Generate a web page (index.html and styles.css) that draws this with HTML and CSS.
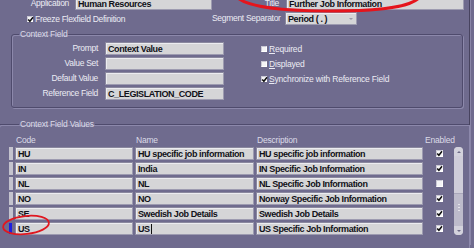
FILE: index.html
```html
<!DOCTYPE html>
<html>
<head>
<meta charset="utf-8">
<link rel="stylesheet" href="styles.css">
</head>
<body>
<div class="window">
  <div class="row r1">
    <span class="lbl w69">Application</span><span class="fld w137">Human Resources</span>
    <span class="lbl w67">Title</span><span class="fld w178">Further Job Information</span>
  </div>
  <div class="row r2">
    <span class="freeze"><span class="cb on"><svg viewBox="0 0 7 7"><path d="M1.2 3.4 L2.9 5.3 L6 1.3"/></svg></span>Freeze Flexfield Definition</span>
    <span class="lbl w67">Segment Separator</span><span class="fld sel">Period ( . )<span class="arr"></span></span>
  </div>

  <fieldset class="group ctx">
    <legend>Context Field</legend>
    <div class="ctx-body">
      <div class="ctx-fields">
        <span class="lbl r">Prompt</span><span class="fld">Context Value</span>
        <span class="lbl r">Value Set</span><span class="fld"></span>
        <span class="lbl r">Default Value</span><span class="fld"></span>
        <span class="lbl r">Reference Field</span><span class="fld">C_LEGISLATION_CODE</span>
      </div>
      <div class="ctx-checks">
        <span class="chk"><span class="cb"></span><u>R</u>equired</span>
        <span class="chk"><span class="cb"></span><u>D</u>isplayed</span>
        <span class="chk"><span class="cb on"><svg viewBox="0 0 7 7"><path d="M1.2 3.4 L2.9 5.3 L6 1.3"/></svg></span><u>S</u>ynchronize with Reference Field</span>
      </div>
    </div>
  </fieldset>

  <fieldset class="group vals">
    <legend>Context Field Values</legend>
    <div class="tbl">
      <span></span><span class="hd">Code</span><span class="hd">Name</span><span class="hd">Description</span><span class="hd c">Enabled</span><span></span>

      <span class="ind"></span><span class="fld">HU</span><span class="fld">HU specific job information</span><span class="fld">HU specific job information</span><span class="en"><span class="cb on"><svg viewBox="0 0 7 7"><path d="M1.2 3.4 L2.9 5.3 L6 1.3"/></svg></span></span>
      <span class="sb"><span class="sb-up"></span><span class="sb-thumb"></span><span class="sb-track"><i></i><i></i><i></i></span><span class="sb-down"></span></span>

      <span class="ind"></span><span class="fld">IN</span><span class="fld">India</span><span class="fld">IN Specific Job Information</span><span class="en"><span class="cb on"><svg viewBox="0 0 7 7"><path d="M1.2 3.4 L2.9 5.3 L6 1.3"/></svg></span></span>

      <span class="ind"></span><span class="fld">NL</span><span class="fld">NL</span><span class="fld">NL Specific Job Information</span><span class="en"><span class="cb"></span></span>

      <span class="ind"></span><span class="fld">NO</span><span class="fld">NO</span><span class="fld">Norway Specific Job Information</span><span class="en"><span class="cb on"><svg viewBox="0 0 7 7"><path d="M1.2 3.4 L2.9 5.3 L6 1.3"/></svg></span></span>

      <span class="ind"></span><span class="fld">SE</span><span class="fld">Swedish Job Details</span><span class="fld">Swedish Job Details</span><span class="en"><span class="cb on"><svg viewBox="0 0 7 7"><path d="M1.2 3.4 L2.9 5.3 L6 1.3"/></svg></span></span>

      <span class="ind cur"><i></i></span><span class="fld">US</span><span class="fld">US<span class="caret"></span></span><span class="fld">US Specific Job Information</span><span class="en"><span class="cb on"><svg viewBox="0 0 7 7"><path d="M1.2 3.4 L2.9 5.3 L6 1.3"/></svg></span></span>
    </div>
  </fieldset>

  <svg class="marks" width="474" height="248" viewBox="0 0 474 248">
    <path d="M234,-6 C234,8 272,14 330,14 C392,14 419,8 422,-4" />
    <ellipse cx="26" cy="228" rx="23" ry="9" transform="rotate(-6 26 228)" />
  </svg>
</div>
</body>
</html>
```
FILE: styles.css
```css
* { box-sizing: border-box; }
html, body { margin: 0; padding: 0; }
body {
  background: #6f6b8e;
  font-family: "Liberation Sans", Arial, sans-serif;
  width: 474px;
  height: 248px;
  overflow: hidden;
}
.window {
  position: relative;
  width: 470px;
  height: 248px;
  border-right: 1px solid #47435f;
  box-shadow: 1px 0 0 #8a86a8;
}
.row {
  display: flex;
  align-items: center;
  height: 13px;
}
.r1 { margin-top: -3px; }
.r2 { margin-top: 2px; }

.lbl {
  color: #ecebf4;
  font-size: 8.5px;
  letter-spacing: -0.3px;
  white-space: nowrap;
  line-height: 13px;
}
.w69 { width: 69px; text-align: right; margin-right: 6px; }
.w67 { width: 67px; text-align: right; margin-right: 7px; }
.r2 .w67 { margin-right: 6px; }

.fld {
  display: flex;
  align-items: center;
  height: 13px;
  background: #d5d5d7;
  border: 1px solid #9d9bb0;
  border-top-color: #8a889e;
  border-left-color: #8a889e;
  box-shadow: inset 1px 1px 0 #ececf0;
  color: #111118;
  font-weight: bold;
  font-size: 9px;
  letter-spacing: -0.4px;
  padding-left: 2px;
  white-space: nowrap;
  overflow: hidden;
}
.w137 { width: 137px; }
.w178 { width: 178px; }
.sel { width: 72px; position: relative; }
.arr {
  margin-left: auto;
  margin-right: 3px;
  width: 0; height: 0;
  border-left: 2px solid transparent;
  border-right: 2px solid transparent;
  border-top: 2px solid #9a98a8;
}

.freeze {
  display: flex;
  align-items: center;
  width: 212px;
  padding-left: 27px;
  color: #ecebf4;
  font-size: 8.5px;
  letter-spacing: -0.3px;
  white-space: nowrap;
}
.cb {
  display: inline-block;
  flex: none;
  width: 6px;
  height: 6px;
  background: #f4f4f6;
  border: 1px solid #c9c8d4;
  border-right-color: #fff;
  border-bottom-color: #fff;
  margin-right: 2px;
  position: relative;
}
.cb svg {
  position: absolute;
  left: -1px; top: -1px;
  width: 7px; height: 7px;
  fill: none;
  stroke: #101010;
  stroke-width: 1.5;
}

.group {
  margin: 0;
  padding: 0;
  border: 1px solid #4f4b6d;
  border-radius: 3px;
  box-shadow: 1px 1px 0 #8c88ab, inset 1px 1px 0 #8c88ab;
  min-width: 0;
}
.group legend {
  color: #dcdbe8;
  font-size: 8.5px;
  letter-spacing: -0.2px;
  line-height: 10px;
  padding: 0 1px;
}
.ctx {
  margin: 4px 0 0 11px;
  width: 452px;
  padding: 0 0 7px 0;
}
.ctx legend { margin-left: 7px; }
.ctx-body {
  display: flex;
  padding-top: 3px;
}
.ctx-fields {
  display: grid;
  grid-template-columns: 86px 119px;
  grid-auto-rows: 13px;
  column-gap: 7px;
  row-gap: 2px;
}
.lbl.r { text-align: right; }
.ctx-checks {
  display: flex;
  flex-direction: column;
  gap: 2px;
  margin-left: 37px;
}
.chk {
  display: flex;
  align-items: center;
  height: 13px;
  color: #ecebf4;
  font-size: 8.5px;
  letter-spacing: -0.2px;
  white-space: nowrap;
}
.chk u { text-decoration-thickness: 1px; text-underline-offset: 1px; }

.vals {
  margin: 11px 0 0 -2px;
  width: 471px;
  padding: 6px 0 20px 10px;
  border-right: none;
  border-radius: 3px 0 0 3px;
}
.vals legend { margin-left: 10px; }
.tbl {
  display: grid;
  grid-template-columns: 4px 118px 119px 167px 27px 9px;
  grid-template-rows: 10px repeat(6, 13px);
  column-gap: 2px;
  row-gap: 2px;
}
.hd {
  color: #dcdbe8;
  font-size: 8.5px;
  letter-spacing: -0.2px;
  line-height: 10px;
  padding-left: 1px;
  white-space: nowrap;
}
.hd.c { text-align: center; padding-left: 0; }
.ind {
  background: #c4c3ce;
  position: relative;
}
.ind.cur { background: transparent; }
.ind.cur i {
  position: absolute;
  left: 0; top: 1px;
  width: 3px; height: 11px;
  background: #1d1ee0;
}
.en {
  display: flex;
  align-items: center;
  justify-content: center;
  padding-left: 1px;
}
.en .cb { margin-right: 0; width: 7px; height: 7px; }
.caret {
  display: inline-block;
  width: 1px;
  height: 10px;
  background: #111;
  margin-left: 1px;
}
.sb {
  grid-column: 6;
  grid-row: 2 / span 6;
  display: flex;
  flex-direction: column;
  background: #bdbbcb;
  border-radius: 4px;
  overflow: hidden;
}
.sb-up, .sb-down {
  height: 9px;
  flex: none;
  display: flex;
  align-items: center;
  justify-content: center;
  background: #d3d2dc;
}
.sb-up::after {
  content: "";
  border-left: 2px solid transparent;
  border-right: 2px solid transparent;
  border-bottom: 2px solid #6d6a86;
}
.sb-down::after {
  content: "";
  border-left: 2px solid transparent;
  border-right: 2px solid transparent;
  border-top: 2px solid #6d6a86;
}
.sb-thumb {
  height: 38px;
  flex: none;
  background: #cfcdd9;
  border-bottom: 1px solid #a9a7ba;
}
.sb-track {
  flex: 1;
  display: flex;
  flex-direction: column;
  align-items: center;
  justify-content: flex-start;
  padding-top: 10px;
  gap: 2px;
}
.sb-track i {
  width: 2px;
  height: 1px;
  background: #e4e3ea;
}

.marks {
  position: absolute;
  left: 0;
  top: 0;
  pointer-events: none;
  fill: none;
  overflow: visible;
}
.marks path {
  stroke: #e5141c;
  stroke-width: 3;
}
.marks ellipse {
  stroke: #e01820;
  stroke-width: 1.8;
}
```
